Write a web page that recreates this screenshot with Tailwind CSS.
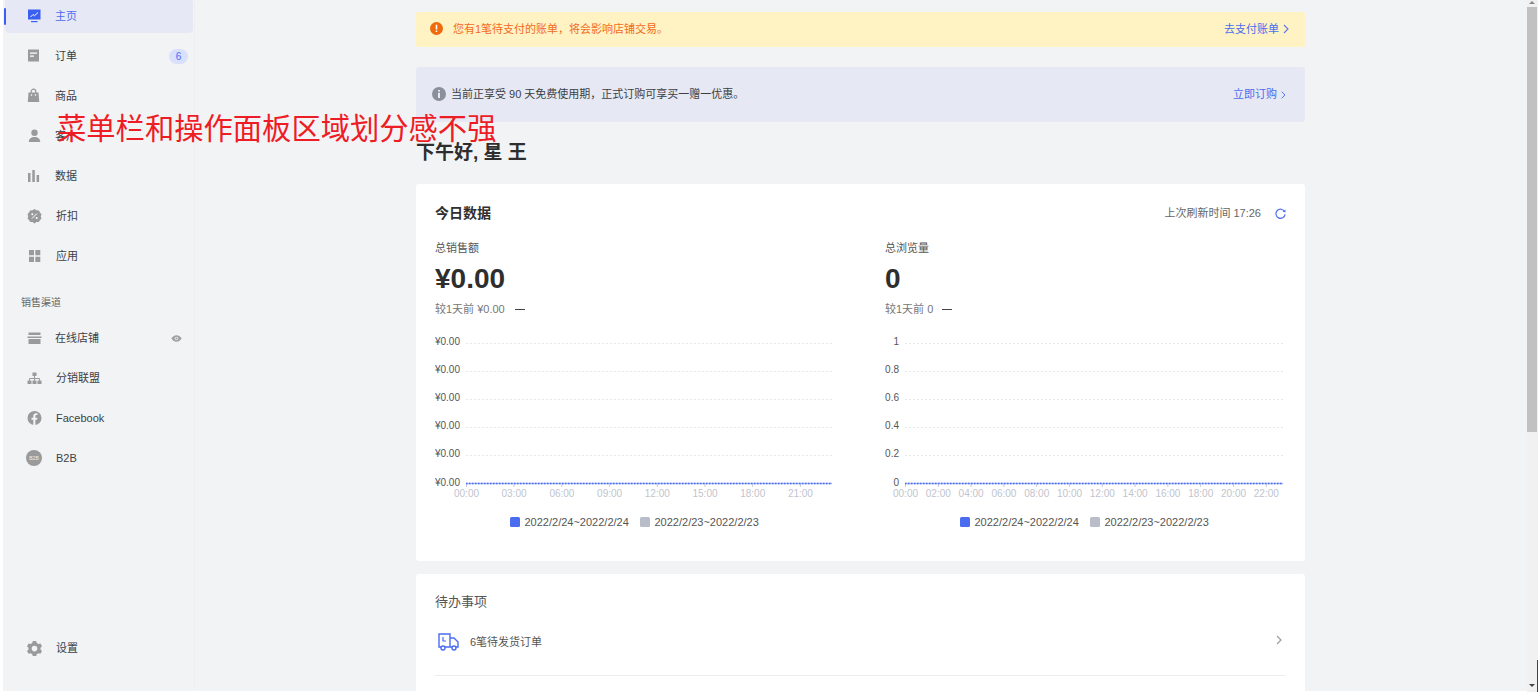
<!DOCTYPE html>
<html lang="zh-CN">

<head>
    <meta charset="UTF-8" />
    <meta name="viewport" content="width=device-width, initial-scale=1.0" />
    <title>主页</title>
    <script src="https://cdn.jsdelivr.net/npm/@tailwindcss/browser@4"></script>
</head>

<body class="bg-white font-['Liberation_Sans','Noto_Sans_CJK_SC',sans-serif] text-[11px] text-[#3c3f45] overflow-hidden">
    <div class="relative w-[1538px] h-[692px] overflow-hidden pl-[3px] pb-px bg-white">
        <div class="flex h-full w-[1524px] bg-[#f2f3f5] overflow-hidden">

            <!-- Sidebar -->
            <aside class="w-[192px] shrink-0 h-full flex flex-col border-r border-[#eceef0] -mt-px pt-0">
                <a class="relative flex items-center h-[34px] mb-[6px] ml-[2px] mr-px pl-[21px] rounded-[4px] bg-[#e6e9f5] text-[#4a6cf0]">
                    <span class="absolute left-[-1px] top-[9px] w-[2px] h-[17px] bg-[#3b5ff0] rounded-full"></span>
                    <svg class="w-[16px] h-[16px] mr-[13px]" viewBox="0 0 16 16"><path fill="#3b5ff0" d="M2 1.500h12.500v10H2z"/><path fill="#3b5ff0" d="M5 13h6.500v1.200H5z"/><path fill="none" stroke="#fff" stroke-width="1" d="M4.500 9l2.500-2.500 1.500 1.200L12 4.500"/></svg>
                    <span>主页</span>
                </a>
                <a class="flex items-center h-[34px] mb-[6px] ml-[2px] mr-px pl-[21px]">
                    <svg class="w-[16px] h-[16px] mr-[13px]" viewBox="0 0 16 16"><path fill="#9a9a9a" d="M2 1.500h11v12H2z"/><path fill="#fff" d="M4 4.500h7v1.200H4zM4 7.500h4v1.200H4z"/></svg>
                    <span>订单</span>
                    <span class="ml-auto mr-[5px] w-[19px] h-[15px] rounded-full bg-[#d9e0fb] text-[#4a6cf0] text-[10px] flex items-center justify-center">6</span>
                </a>
                <a class="flex items-center h-[34px] mb-[6px] ml-[2px] mr-px pl-[21px]">
                    <svg class="w-[16px] h-[16px] mr-[13px]" viewBox="0 0 16 16"><path fill="#9a9a9a" d="M2.500 4.500h10l.8 9.500H1.800z"/><path fill="none" stroke="#9a9a9a" stroke-width="1.200" d="M5.200 5V3.500a2.300 2.300 0 0 1 4.600 0V5"/><circle cx="5.500" cy="7" r=".8" fill="#fff"/><circle cx="9.500" cy="7" r=".8" fill="#fff"/></svg>
                    <span>商品</span>
                </a>
                <a class="flex items-center h-[34px] mb-[6px] ml-[2px] mr-px pl-[21px]">
                    <svg class="w-[16px] h-[16px] mr-[13px]" viewBox="0 0 16 16"><circle cx="8.500" cy="4.800" r="3.200" fill="#9a9a9a"/><path fill="#9a9a9a" d="M2.800 14c0-3.500 2.500-5 5.700-5s5.700 1.500 5.700 5z"/></svg>
                    <span>客户</span>
                </a>
                <a class="flex items-center h-[34px] mb-[6px] ml-[2px] mr-px pl-[21px]">
                    <svg class="w-[16px] h-[16px] mr-[13px]" viewBox="0 0 16 16"><path fill="#9a9a9a" d="M2 5h2.500v9H2zM6.300 2h2.500v12H6.300zM10.600 7h2.500v7h-2.500z"/></svg>
                    <span>数据</span>
                </a>
                <a class="flex items-center h-[34px] mb-[6px] ml-[2px] mr-px pl-[21px]">
                    <svg class="w-[16px] h-[16px] mr-[14px]" viewBox="0 0 16 16"><path fill="#9a9a9a" d="M8.500 1l2 1.300 2.400.1 1.100 2.100 1.500 1.800-.7 2.200.7 2.200-1.500 1.200-1.100 2.100-2.400.1-2 1.300-2-1.300-2.400-.1-1.100-2.100L1.500 10.500l.7-2.200-.7-2.200L3 4.500l1.100-2.100 2.400-.1z"/><path fill="none" stroke="#fff" stroke-width="1" d="M6 10.500l5-5"/><circle cx="6.300" cy="6.200" r="1" fill="#fff"/><circle cx="10.700" cy="10" r="1" fill="#fff"/></svg>
                    <span>折扣</span>
                </a>
                <a class="flex items-center h-[34px] mb-[6px] ml-[2px] mr-px pl-[21px]">
                    <svg class="w-[16px] h-[16px] mr-[14px]" viewBox="0 0 16 16"><path fill="#9a9a9a" d="M3 2h5v5.300H3zM9.300 2h5v5.300h-5zM3 8.700h5V14H3zM9.300 8.700h5V14h-5z"/></svg>
                    <span>应用</span>
                </a>

                <div class="h-[16px] mt-[16px] ml-[18px] text-[10px] leading-[16px] text-[#666]">销售渠道</div>

                <a class="flex items-center h-[34px] mt-[10px] mb-[6px] ml-[2px] mr-px pl-[21px]">
                    <svg class="w-[16px] h-[16px] mr-[13px]" viewBox="0 0 16 16"><path fill="#9a9a9a" d="M2.500 2.500h12V5h-12zM1.500 6.500h14v1.500h-14zM2.500 9h12v5h-12z"/></svg>
                    <span>在线店铺</span>
                    <svg class="ml-auto mr-[11px] w-[11px] h-[11px]" viewBox="0 0 12 12"><path fill="#a0a0a0" d="M6 2.500C3.500 2.500 1.500 4.300.5 6c1 1.700 3 3.500 5.500 3.500s4.500-1.800 5.500-3.500c-1-1.700-3-3.500-5.500-3.500z"/><circle cx="6" cy="6" r="2" fill="#f2f3f5"/><circle cx="6" cy="6" r="1.200" fill="#a0a0a0"/></svg>
                </a>
                <a class="flex items-center h-[34px] mb-[6px] ml-[2px] mr-px pl-[21px]">
                    <svg class="w-[16px] h-[16px] mr-[14px]" viewBox="0 0 16 16"><path fill="#9a9a9a" d="M6.500 2.500h4v3.500h-4zM1.500 10.500h4V14h-4zM6.500 10.500h4V14h-4zM11.500 10.500h4V14h-4z"/><path fill="none" stroke="#9a9a9a" d="M8.500 6v4.500M3.500 10.500V8.500h10v2"/></svg>
                    <span>分销联盟</span>
                </a>
                <a class="flex items-center h-[34px] mb-[6px] ml-[2px] mr-px pl-[21px]">
                    <svg class="w-[16px] h-[16px] mr-[14px]" viewBox="0 0 16 16"><circle cx="8.500" cy="8" r="7" fill="#9a9a9a"/><path fill="#f2f3f5" d="M7.300 15V9.800H5.500V7.700h1.800V6c0-1.800 1.100-2.800 2.700-2.800.8 0 1.500.1 1.500.1v1.800h-.9c-.9 0-1.200.6-1.200 1.100v1.500h2l-.3 2.100H9.400V15z"/></svg>
                    <span>Facebook</span>
                </a>
                <a class="flex items-center h-[34px] ml-[2px] mr-px pl-[21px]">
                    <span class="w-[16px] h-[16px] mr-[14px] rounded-full bg-[#9a9a9a] text-[#eee] text-[5px] leading-[16px] text-center">B2B</span>
                    <span>B2B</span>
                </a>

                <a class="mt-auto mb-[25px] flex items-center h-[34px] ml-[2px] mr-px pl-[21px]">
                    <svg class="w-[16px] h-[16px] mr-[14px]" viewBox="0 0 16 16"><path fill="#9a9a9a" fill-rule="evenodd" d="M6.800 1h3.400l.5 2 1.700 1 2-.6 1.600 2.900-1.500 1.400v1.800l1.500 1.400-1.600 2.900-2-.6-1.700 1-.5 2H6.800l-.5-2-1.700-1-2 .6L1 10.900l1.500-1.400V7.700L1 6.300l1.600-2.900 2 .6 1.700-1zM8.500 5.800a2.800 2.800 0 1 0 0 5.600 2.800 2.800 0 0 0 0-5.600z"/></svg>
                    <span>设置</span>
                </a>
            </aside>

            <!-- Main -->
            <main class="flex-1 min-w-0 h-full pl-[221px] pt-[12px]">
                <div class="w-[889px]">
                    <div class="h-[35px] flex items-center justify-between pl-[14px] pr-[16px] rounded-[2px] bg-[#fff3c4]">
                        <div class="flex items-center text-[#f26b1d]">
                            <svg class="w-[13px] h-[13px] mr-[10px] -mt-[2px]" viewBox="0 0 13 13"><circle cx="6.500" cy="6.500" r="6.500" fill="#ef6a0c"/><path fill="#fff" d="M5.700 2.800h1.600v4.800H5.700zM5.700 8.600h1.600v1.500H5.700z"/></svg>
                            <span>您有1笔待支付的账单，将会影响店铺交易。</span>
                        </div>
                        <a class="flex items-center text-[#4a6cf0]">去支付账单
                            <svg class="w-[6px] h-[10px] ml-[4px] -mt-[2px]" viewBox="0 0 6 10"><path fill="none" stroke="#5a78ee" stroke-width="1.100" d="M1 1l4 4-4 4"/></svg>
                        </a>
                    </div>

                    <div class="mt-[20px] h-[55px] flex items-center justify-between pl-[16px] pr-[19px] rounded-[3px] bg-[#e6e8f3]">
                        <div class="flex items-center">
                            <svg class="w-[14px] h-[14px] mr-[5px] -mt-[1px]" viewBox="0 0 14 14"><circle cx="7" cy="7" r="7" fill="#8a8f9c"/><path fill="#fff" d="M6.200 3h1.600v1.500H6.200zM6.200 5.800h1.600v5.200H6.200z"/></svg>
                            <span>当前正享受 90 天免费使用期，正式订购可享买一赠一优惠。</span>
                        </div>
                        <a class="flex items-center text-[#4a6cf0]">立即订购
                            <svg class="w-[5px] h-[8px] ml-[4px]" viewBox="0 0 5 8"><path fill="none" stroke="#5a78ee" stroke-width="1" d="M.7.700L4 4 .7 7.300"/></svg>
                        </a>
                    </div>

                    <h1 class="mt-[19px] h-[24px] leading-[24px] text-[19px] font-bold text-[#2e2e2e]">下午好, 星 王</h1>

                    <!-- Today's data -->
                    <section class="mt-[19px] h-[377px] rounded-[3px] bg-white pt-[19px] px-[19px]">
                        <div class="flex items-center justify-between h-[20px]">
                            <h2 class="text-[14px] font-bold text-[#303030]">今日数据</h2>
                            <div class="flex items-center text-[#666]">
                                <span>上次刷新时间 17:26</span>
                                <svg class="w-[11px] h-[11px] ml-[14px]" viewBox="0 0 12 12"><path fill="none" stroke="#4a6cf0" stroke-width="1.300" d="M10.500 4A5 5 0 1 0 11 7"/><path fill="#4a6cf0" d="M8.500 4.300l3 .2-.2-3z"/></svg>
                            </div>
                        </div>

                        <div class="grid grid-cols-[450px_1fr] mt-[17px]">
                            <div>
                                <div class="h-[16px] leading-[16px] text-[#555]">总销售额</div>
                                <div class="mt-[6px] h-[34px] leading-[34px] text-[28px] font-bold text-[#2e2e2e]">¥0.00</div>
                                <div class="mt-[5px] h-[16px] flex items-center text-[#777]">较1天前 ¥0.00<span class="ml-[10px] w-[10px] h-px bg-[#444]"></span></div>
                                <svg class="block mt-[13px]" width="450" height="204" viewBox="0 0 450 204" font-size="10" fill="#555">
                                    <g stroke="#e6e8ec" stroke-dasharray="2 2">
                                        <path d="M31 13.500h366M31 41.500h366M31 69.500h366M31 97.500h366M31 125.500h366"/>
                                    </g>
                                    <g text-anchor="end">
                                        <text x="25" y="15">¥0.00</text>
                                        <text x="25" y="43">¥0.00</text>
                                        <text x="25" y="71">¥0.00</text>
                                        <text x="25" y="99">¥0.00</text>
                                        <text x="25" y="127">¥0.00</text>
                                        <text x="25" y="156">¥0.00</text>
                                    </g>
                                    <path stroke="#c5cbe0" d="M31.500 153v4M79 153v4M126.900 153v4M174.600 153v4M222.300 153v4M270 153v4M317.700 153v4M365.400 153v4"/>
                                    <path stroke="#a9b8f5" stroke-width="1.500" d="M31 153.500h366"/>
                                    <path stroke="#4a6cf0" stroke-width="1.500" stroke-dasharray="1.500 1.500" d="M31 153.500h366"/>
                                    <g text-anchor="middle" fill="#bfc4ce">
                                        <text x="31.500" y="167">00:00</text>
                                        <text x="79" y="167">03:00</text>
                                        <text x="126.900" y="167">06:00</text>
                                        <text x="174.600" y="167">09:00</text>
                                        <text x="222.300" y="167">12:00</text>
                                        <text x="270" y="167">15:00</text>
                                        <text x="317.700" y="167">18:00</text>
                                        <text x="365.400" y="167">21:00</text>
                                    </g>
                                    <rect x="75" y="187" width="10" height="10" rx="1.500" fill="#4a6cf0"/>
                                    <text x="89.500" y="196" font-size="11">2022/2/24~2022/2/24</text>
                                    <rect x="205" y="187" width="10" height="10" rx="1.500" fill="#b8bdc9"/>
                                    <text x="219.500" y="196" font-size="11">2022/2/23~2022/2/23</text>
                                </svg>
                            </div>
                            <div>
                                <div class="h-[16px] leading-[16px] text-[#555]">总浏览量</div>
                                <div class="mt-[6px] h-[34px] leading-[34px] text-[28px] font-bold text-[#2e2e2e]">0</div>
                                <div class="mt-[5px] h-[16px] flex items-center text-[#777]">较1天前 0<span class="ml-[9px] w-[10px] h-px bg-[#444]"></span></div>
                                <svg class="block mt-[13px]" width="401" height="204" viewBox="0 0 401 204" font-size="10" fill="#555">
                                    <g stroke="#e6e8ec" stroke-dasharray="2 2">
                                        <path d="M20 13.500h378M20 41.500h378M20 69.500h378M20 97.500h378M20 125.500h378"/>
                                    </g>
                                    <g text-anchor="end">
                                        <text x="14" y="15">1</text>
                                        <text x="14" y="43">0.8</text>
                                        <text x="14" y="71">0.6</text>
                                        <text x="14" y="99">0.4</text>
                                        <text x="14" y="127">0.2</text>
                                        <text x="14" y="156">0</text>
                                    </g>
                                    <path stroke="#c5cbe0" d="M20.500 153v4M53.300 153v4M86.100 153v4M118.900 153v4M151.700 153v4M184.500 153v4M217.300 153v4M250.100 153v4M282.900 153v4M315.700 153v4M348.500 153v4M381.300 153v4"/>
                                    <path stroke="#a9b8f5" stroke-width="1.500" d="M20 153.500h378"/>
                                    <path stroke="#4a6cf0" stroke-width="1.500" stroke-dasharray="1.500 1.500" d="M20 153.500h378"/>
                                    <g text-anchor="middle" fill="#bfc4ce">
                                        <text x="20.500" y="167">00:00</text>
                                        <text x="53.300" y="167">02:00</text>
                                        <text x="86.100" y="167">04:00</text>
                                        <text x="118.900" y="167">06:00</text>
                                        <text x="151.700" y="167">08:00</text>
                                        <text x="184.500" y="167">10:00</text>
                                        <text x="217.300" y="167">12:00</text>
                                        <text x="250.100" y="167">14:00</text>
                                        <text x="282.900" y="167">16:00</text>
                                        <text x="315.700" y="167">18:00</text>
                                        <text x="348.500" y="167">20:00</text>
                                        <text x="381.300" y="167">22:00</text>
                                    </g>
                                    <rect x="75" y="187" width="10" height="10" rx="1.500" fill="#4a6cf0"/>
                                    <text x="89.500" y="196" font-size="11">2022/2/24~2022/2/24</text>
                                    <rect x="205" y="187" width="10" height="10" rx="1.500" fill="#b8bdc9"/>
                                    <text x="219.500" y="196" font-size="11">2022/2/23~2022/2/23</text>
                                </svg>
                            </div>
                        </div>
                    </section>

                    <!-- To-do -->
                    <section class="mt-[13px] h-[200px] rounded-[3px] bg-white pt-[19px] px-[19px]">
                        <h2 class="h-[18px] leading-[18px] text-[13px] text-[#555]">待办事项</h2>
                        <div class="mt-[11px] h-[40px] flex items-center">
                            <svg class="w-[21px] h-[18px] ml-[3px] mr-[11px]" viewBox="0 0 21 18"><path fill="none" stroke="#4a6cf0" stroke-width="1.400" d="M3 14H1V1h11v13H7M12 5h4l4 4v5h-2M12 14h2"/><circle cx="5" cy="15" r="2" fill="none" stroke="#4a6cf0" stroke-width="1.400"/><circle cx="16" cy="15" r="2" fill="none" stroke="#4a6cf0" stroke-width="1.400"/><path fill="none" stroke="#4a6cf0" stroke-width="1.200" d="M5 4v4h3"/></svg>
                            <span class="text-[#555]">6笔待发货订单</span>
                            <svg class="ml-auto mr-[4px] -mt-[5px] w-[6px] h-[10px]" viewBox="0 0 6 10"><path fill="none" stroke="#999" stroke-width="1.100" d="M1 1l4 4-4 4"/></svg>
                        </div>
                        <div class="mt-[13px] h-px bg-[#eceef0]"></div>
                    </section>
                </div>
            </main>
        </div>

        <!-- Annotation over the page -->
        <div class="absolute left-[57px] top-[110px] text-[29.300px] leading-[38px] whitespace-nowrap text-[#ee1c25]">菜单栏和操作面板区域划分感不强</div>

        <!-- Browser scrollbar -->
        <div class="absolute right-0 top-0 w-[11px] h-full bg-[#f1f1f1]">
            <div class="absolute top-[7px] left-0 w-[10px] h-[425px] bg-[#c1c1c1]"></div>
            <div class="absolute top-[1px] left-[2px] w-0 h-0 border-x-[3px] border-x-transparent border-b-[3px] border-b-[#888]"></div>
            <div class="absolute top-[660px] right-0 w-px h-[32px] bg-[#444]"></div>
            <div class="absolute bottom-[5px] left-[2px] w-0 h-0 border-x-[3px] border-x-transparent border-t-[3px] border-t-[#444]"></div>
        </div>
    </div>
</body>

</html>
